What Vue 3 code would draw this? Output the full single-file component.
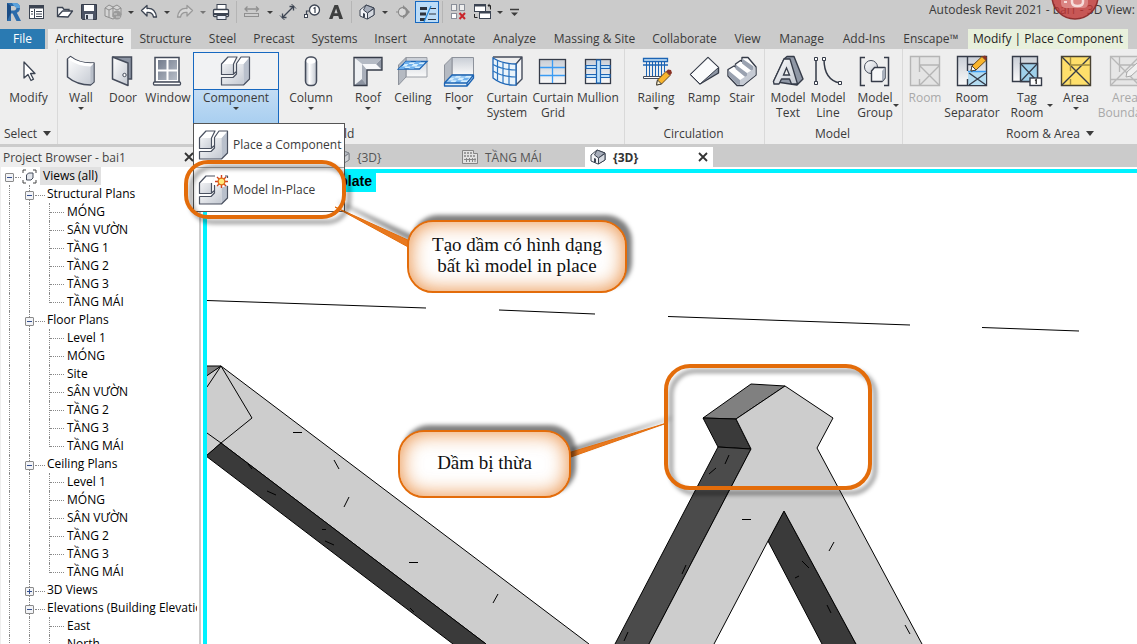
<script setup>
const icons = {
  revit: '<path d="M6 3h7.500q5.500 0 5.500 5 0 3.500-3.200 4.700L20 21h-4.500l-3.800-7.500H10V21H6z" fill="#2d6cab"/><path d="M6 3l4 3v7l-4 8z" fill="#1b4d86"/><path d="M10 6h3q2.200 0 2.200 2.200T13 10.500h-3z" fill="#cbcbcb"/><path d="M11 3h3q5 0 5 5l-4 0q0-2-2-2z" fill="#5ba2dc"/>',
  panel: '<rect x="4.500" y="5.500" width="14" height="13" fill="#fff" stroke="#3c4452"/><path d="M4 7h15" stroke="#3c4452" stroke-width="3"/><path d="M9.500 9v9M11 11.500h6M11 14h6M11 16.500h6M6 11.500h2M6 14h2" stroke="#3c4452"/>',
  open: '<path d="M4.500 16.500v-9h5l1.500 2h5v3" fill="#f4f5f7" stroke="#3c4452" stroke-width="1.300"/><path d="M4.500 16.500l5-5.500h10l-4.500 6z" fill="#fff" stroke="#3c4452" stroke-width="1.300" stroke-linejoin="round"/>',
  save: '<path d="M4.500 4.500h15v15h-14l-1-1z" fill="#4b5364" stroke="#343b49"/><rect x="7" y="5" width="10" height="6" fill="#fff"/><rect x="8" y="14" width="8" height="5.500" fill="#dfe3e9"/><rect x="9" y="15" width="2" height="4" fill="#343b49"/>',
  sync: '<path d="M4 8l4-3 4 2 4-2 4 3v7l-8 4-8-3z" fill="#d4d4d4" stroke="#8d8d8d"/><path d="M4 8l4 2 4-2 4 2 4-2M8 10v7M12 7v10" fill="none" stroke="#8d8d8d"/><circle cx="16" cy="15" r="4.500" fill="#9b9b9b"/><path d="M13 14h3M15 17h4" stroke="#d0d0d0"/>',
  undo: '<path d="M4.500 10.500L10 5.500V8.500q8-1 9.500 8.500h-3q-1-5-6.500-4.500v3.500z" fill="#fff" stroke="#3c4452" stroke-width="1.300" stroke-linejoin="round"/>',
  redo: '<path d="M19.500 10.500L14 5.500V8.500q-8-1-9.500 8.500h3q1-5 6.500-4.500v3.500z" fill="#d8d8d8" stroke="#999" stroke-width="1.300" stroke-linejoin="round"/>',
  print: '<rect x="8" y="4.500" width="9" height="6" fill="#fff" stroke="#3c4452"/><rect x="4.500" y="9.500" width="15" height="7" rx="1" fill="#fff" stroke="#3c4452" stroke-width="1.300"/><path d="M5 14h14" stroke="#3c4452" stroke-width="2"/><rect x="8" y="15.500" width="9" height="4" fill="#e9edf5" stroke="#3c4452"/>',
  measure: '<path d="M5 9h13M7.500 6.500L5 9l2.500 2.500M16 6.500L18.500 9 16 11.500" fill="none" stroke="#909090" stroke-width="1.300"/><rect x="4.500" y="13.500" width="14" height="3" fill="#ccc" stroke="#909090"/>',
  dim: '<path d="M6 18L18 6M6.500 13.500v4h4M13.500 6.500h4v4" fill="none" stroke="#3c4452" stroke-width="1.300"/><path d="M4 15.500l4.500 4.500M15.500 4l4.500 4.500" stroke="#3c4452"/>',
  tag: '<circle cx="14.500" cy="10" r="5" fill="#fff" stroke="#3c4452" stroke-width="1.300"/><path d="M13.500 8.500l1.500-1v5.500M9.500 11H6.500v4" fill="none" stroke="#3c4452" stroke-width="1.200"/><rect x="4.500" y="14.500" width="3" height="3" fill="#fff" stroke="#3c4452"/>',
  letter: '<path d="M5 19L10.500 5h3.500L19 19h-3.700l-1-3H9.500l-1 3zM10.400 13.300h3.200L12.100 8.500z" fill="#3f4040" fill-rule="evenodd"/>',
  house: '<path d="M5 10l6-5 8 3v7l-7 4-7-3z" fill="#f3f4f7" stroke="#3c4452" stroke-linejoin="round"/><path d="M11 5l8 3-6.500 5L8.500 10z" fill="#a7aebb" stroke="#3c4452" stroke-linejoin="round"/><path d="M12.500 13v6l6.500-4V8.500z" fill="#d5d9e0" stroke="#3c4452"/><path d="M8 13v4l2 .8v-4z" fill="#3c4452"/>',
  section: '<circle cx="12" cy="12" r="4.500" fill="#d9d9d9" stroke="#8b8b8b" stroke-width="1.300"/><path d="M12 5l7 7-7 7z" fill="#8b8b8b"/><circle cx="11.500" cy="12" r="3.300" fill="#d9d9d9"/><path d="M5 12h3" stroke="#8b8b8b"/>',
  thin: '<path d="M4 6.500h7M4 12h6M4 17.500h5" stroke="#2e333d" stroke-width="3"/><path d="M14 6.500h6M13 12h7M12 17.500h8" stroke="#2e333d"/><path d="M15 4L8 20" stroke="#2386d8" stroke-width="1.200"/>',
  hide: '<rect x="5.500" y="4.500" width="5" height="6" fill="#eee" stroke="#8a8f99"/><rect x="13.500" y="4.500" width="5" height="6" fill="#eee" stroke="#8a8f99"/><rect x="5.500" y="13.500" width="5" height="5" fill="#fff" stroke="#8a8f99"/><path d="M13.500 13l5.500 6M19 13l-5.500 6" stroke="#c9252b" stroke-width="2"/>',
  switch: '<rect x="4.500" y="4.500" width="11" height="7" fill="#fff" stroke="#3c4452"/><path d="M4 5.500h12" stroke="#3c4452" stroke-width="2"/><rect x="9.500" y="11.500" width="11" height="7" fill="#fff" stroke="#3c4452"/><path d="M9 12.500h12" stroke="#3c4452" stroke-width="2"/><path d="M18 5.500h2.500v4M4.500 14v3.500h3" fill="none" stroke="#222"/><path d="M17.500 5.500l2-2v4z" fill="#222"/>',
  more: '<path d="M0 2.500h9" stroke="#3c3c3c" stroke-width="1.500"/><path d="M1 5.500h7L4.500 9z" fill="#3c3c3c"/>',

  modify: '<path d="M11 7v16l4-3.500 3 6 2.500-1.300-3-5.700h4.500z" fill="#fff" stroke="#3c4452" stroke-width="1.300" stroke-linejoin="round"/>',
  wall: '<path d="M2.500 4l3-2.500Q15 9 29 8v19l-3.500 3Q12 30 2.500 22z" fill="url(#metal)" stroke="#454c5b" stroke-width="1.500" stroke-linejoin="round"/><path d="M3 4Q13 11.500 25.500 11.500L29 8Q15 9 5.500 2z" fill="#fff"/><path d="M25.500 12v17.500l3-2.500V9z" fill="#b9bfc9"/>',
  door: '<path d="M5.500 2h19v22h-4" fill="#8c94a3" stroke="#454c5b" stroke-width="1.500"/><path d="M5.500 2L21 8v22.500L5.500 24z" fill="url(#metal)" stroke="#454c5b" stroke-width="1.500" stroke-linejoin="round"/><circle cx="17.500" cy="20" r="1.700" fill="#fff" stroke="#454c5b"/>',
  window: '<rect x="3" y="2.500" width="24" height="25" fill="#fff" stroke="#454c5b" stroke-width="1.500"/><path d="M6 5h8.500v9.500H6zM16.500 5H25v9.500h-8.500zM6 16.500h8.500V25H6zM16.500 16.500H25V25h-8.500z" fill="url(#glass)"/><rect x="1.500" y="27" width="27" height="3" rx="1" fill="#fff" stroke="#454c5b" stroke-width="1.300"/>',
  component: '<path d="M1.500 22.500H13l3.500-3.500V8.500L21 2h8.500v22l-6 6h-22z" fill="#f2f4f7"/><path d="M1.500 22.500H13l4-3V9h6.500v21h-22z" fill="url(#metal)"/><path d="M23.500 9l6-7v22l-6 6z" fill="#b9c0cc"/><path d="M16.500 8.500L21 2h8.500l-6 7z" fill="#fff"/><path d="M1.500 9L8 2h8.500L13.500 9v10.500h-12z" fill="url(#metal)"/><path d="M1.500 9L8 2h8.500L13.500 9z" fill="#fff"/><path d="M13.500 19.500V9L17 2H8L1.500 9v10.500H13l3.500-3M1.500 22.500H13l3.500-3.500V8.500L21 2h8.500v22l-6 6h-22z" fill="none" stroke="#4a5160" stroke-width="1.200" stroke-linejoin="round"/>',
  inplace: '<path d="M1.500 22.500H13l4-3V12h6.500v18h-22z" fill="url(#metal)"/><path d="M23.500 14l6-3v13l-6 6z" fill="#b9c0cc"/><path d="M1.500 9L8 2h9l-3.500 7v10.500h-12z" fill="url(#metal)"/><path d="M1.500 9L8 2h9l-3.500 7z" fill="#fff"/><path d="M13.500 19.500V9M17 2H8L1.500 9v10.500H13l3.500-3M1.500 22.500H13l3.500-3.500V11M29.500 12v12l-6 6h-22v-7.500M27 2h2.500v2" fill="none" stroke="#4a5160" stroke-width="1.200" stroke-linejoin="round"/><path d="M23.500 1v13M17 7.500h13M19 3l9 9M28 3l-9 9" stroke="#d2401e" stroke-width="1.400"/><circle cx="23.500" cy="7.500" r="3.300" fill="#ffe97a" stroke="#e1701a" stroke-width="1.300"/>',
  column: '<rect x="10.500" y="2" width="11" height="28.500" rx="4.500" fill="url(#tube)" stroke="#454c5b" stroke-width="1.500"/><ellipse cx="16" cy="6" rx="4.500" ry="2.800" fill="#fff"/>',
  roof: '<path d="M2 2.500h28V15H15v15.500H2z" fill="#dfe2e7"/><path d="M2 2.500h28L24 9H10z" fill="#b4bac4"/><path d="M24 9l6-6v12H15l-5-6z" fill="#f7f8fa"/><path d="M2 2.500L10 9v15l-8 6.500z" fill="#eef0f3"/><path d="M10 9l5 6v15.500L10 24z" fill="#a9afba"/><path d="M2 30.500L10 24l5 6.500z" fill="#8d94a1"/><path d="M24 9l6-6v12z" fill="#8f96a3"/><path d="M2 2.500h28V15H15v15.500H2z" fill="none" stroke="#353b48" stroke-width="1.300"/>',
  ceiling: '<path d="M9 2.500h21V22H9z" fill="url(#soft)" stroke="#9b9fa6"/><path d="M1.500 10L9 2.500V22l-7.500 8z" fill="#b5bac2" stroke="#8d929b"/><path d="M1.500 14L9 6.500h21L22.500 14z" fill="#d6efff" stroke="#1c64b4" stroke-width="1.300"/><path d="M9 6.500h5L11.500 9h-5zM19 6.500h5L21.500 9h-5zM11.500 9h5L14 11.500H9zM21.500 9h5L24 11.500h-5zM4 11.500h5L6.500 14h-5zM14 11.500h5L16.500 14h-5z" fill="#6fb1ee"/>',
  floor: '<path d="M9 2.500h21.500V20H9z" fill="url(#soft)" stroke="#8d929b"/><path d="M1.500 10L9 2.500V20l-7.500 8z" fill="#b5bac2" stroke="#8d929b"/><path d="M1.500 28L9 20h21.500L24 28z" fill="#d6efff"/><path d="M9 20h5l-2.500 2.700h-5zM19 20h5l-2.500 2.700h-5zM11.500 22.700h5L14 25.300H9zM21.500 22.700h5L24 25.300h-5zM4 25.300h5L6.500 28h-5zM14 25.300h5L16.500 28h-5z" fill="#6fb1ee"/><path d="M1.500 28v3H24l6.500-8v-3L24 28zM24 28v3M1.500 28L9 20h21.500" fill="#cfe8fb" fill-opacity=".4" stroke="#1c64b4" stroke-width="1.300" stroke-linejoin="round"/>',
  csystem: '<path d="M2 2h29l-6 7v21l6-6V2" fill="#f4f5f7" stroke="#454c5b" stroke-width="1.400" stroke-linejoin="round"/><path d="M2 3Q12 9 25 9v21Q12 31 2 23z" fill="#eaf4fb" stroke="#1c64b4" stroke-width="1.300"/><path d="M2 9.500Q12 15 25 15M2 16Q12 22 25 22M6.500 5.500v20M12 7.500v21M18 8.500v21" fill="none" stroke="#2a74c0" stroke-width="1.200"/>',
  cgrid: '<rect x="2.500" y="4.500" width="26" height="24" fill="url(#soft)" stroke="#353b48" stroke-width="1.300"/><path d="M15.500 5v23M3 12.500h25M3 20.500h25" stroke="#3a9bf3" stroke-width="1.300"/>',
  mullion: '<rect x="3.500" y="4.500" width="25" height="24" fill="url(#soft)" stroke="#353b48" stroke-width="1.300"/><path d="M4 10.500h24v3H4zM4 19.500h24v3H4z" fill="#bfe2fb" stroke="#1c64b4" stroke-width="1.200"/><rect x="14.500" y="5" width="4" height="23" fill="#bfe2fb" stroke="#1c64b4" stroke-width="1.200"/>',
  railing: '<path d="M3.500 3.500h24v3h-24zM3 10h25" fill="#cfe9fb" stroke="#1c64b4" stroke-width="1.300"/><path d="M6.500 7v14M9.500 7v14M12.500 7v14M15.500 7v14M18.500 7v14M21.500 7v14M24.500 7v10" stroke="#1c64b4"/><path d="M3.500 21.500h20v2h-20z" fill="#fff" stroke="#454c5b"/><path d="M16.500 30l1-5L26 16.500l4 4-8.500 8.500z" fill="#f9b52d" stroke="#684717"/><path d="M26 16.500l2-2 3 .5 1 3-2 2.500z" fill="#8a3325"/><path d="M16.500 30l1-5 4 4z" fill="#fff2cc" stroke="#444"/>',
  ramp: '<path d="M2.500 19.500L20 2.500l10.500 10v5.500L12 29z" fill="#8f97a5" stroke="#353b48" stroke-width="1.400" stroke-linejoin="round"/><path d="M2.500 19.500L20 2.500l10.500 10L12 29z" fill="#fafbfc" stroke="#353b48" stroke-linejoin="round"/>',
  stair: '<path d="M2 14.500l6-3.500 1.500 1V9l5-3.500 1.500 1V2.500h6L30 12v8L17 30.500H11L2 21z" fill="#fff" stroke="#353b48" stroke-width="1.400" stroke-linejoin="round"/><path d="M2.500 15.500L14 25v5l-3-.5-8.500-9zM9.500 9.500L21 18v5.500L9.500 14zM16 3.500L27 11v6L16 8.500z" fill="#9aa2b0"/><path d="M14 25l7-4.500V18l6-3.500V11l2.500 1.500V20L17 30h-3z" fill="#c6cbd4"/>',
  mtext: '<path d="M1.500 26.500L12 4l3-2.500h7L31 24l-6 6z" fill="#8f97a5" stroke="#353b48" stroke-width="1.400" stroke-linejoin="round"/><path d="M1.500 26.500L12 4h6l7.500 25h-6l-2-5h-8l-2.500 5H2z" fill="url(#metal)" stroke="#353b48" stroke-width="1.300" stroke-linejoin="round"/><path d="M11.500 20l3-7 3 7z" fill="#eee" stroke="#353b48" stroke-width="1.300"/>',
  mline: '<path d="M4 4v24M12 4Q12 25 28 28" fill="none" stroke="#353b48" stroke-width="1.500"/><path d="M2.500 2.500h3v3h-3zM2.500 26.500h3v3h-3zM10.500 2.500h3v3h-3zM26.500 26.500h3v3h-3z" fill="#fff" stroke="#353b48"/>',
  mgroup: '<path d="M6 2.500H1.500v28H6M25 2.500h4.500v28H25" fill="none" stroke="#353b48" stroke-width="1.500"/><circle cx="12" cy="12" r="6.500" fill="url(#metal)" stroke="#454c5b"/><path d="M12.500 16l3-3.500H26V23l-3 3.500H12.500z" fill="#f6f7f9" stroke="#353b48" stroke-width="1.400" stroke-linejoin="round"/><path d="M23 16l3-3.500V23l-3 3.500z" fill="#a9b0bc"/>',
  room: '<g fill="none" stroke="#b5b5b5" stroke-width="1.400"><path d="M1.500 1.500h29v29h-29z" fill="#e4e4e4"/><path d="M10.500 2v15M10.500 24v6M11 10h19M11 11l19 19M30 11L11 30"/></g>',
  separator: '<g stroke="#353b48" stroke-width="1.400"><path d="M1.500 1.500h29v29h-29z" fill="url(#soft)"/><path d="M12 17h18v13H12z" fill="#b4dcf1" stroke="none"/><path d="M11.500 2v14M11.500 24v6M12 9.500h6M13 30l17-12M13 18l17 12" fill="none"/></g><path d="M12 16.500h18" stroke="#3a9bf3" stroke-width="1.500"/><path d="M15 16l1-5L26 1.500l4 4L20 15z" fill="#f9b52d" stroke="#684717"/><path d="M26 1.500l4 4 1-3-2-2z" fill="#8a3325"/><path d="M15 16l1-5 4 4z" fill="#fff" stroke="#444"/>',
  tagroom: '<g stroke="#353b48" stroke-width="1.400"><path d="M1.500 1.500h25v25h-25z" fill="url(#soft)"/><path d="M9.500 8.500h17v18h-17z" fill="#9fd0ea"/><path d="M9.500 2v7M10 9l16 17M26 9L10 26" fill="none" stroke-width="1.200"/></g><rect x="19" y="23" width="11.500" height="7.500" fill="#fff" stroke="#353b48" stroke-width="1.400"/><path d="M24 25.500l1.200-.8V29" fill="none" stroke="#222" stroke-width="1.300"/>',
  area: '<g stroke="#4a4433" stroke-width="1.400" fill="none"><path d="M1.500 1.500h29v29h-29z" fill="#fedf6b"/><path d="M2 2l28 28M30 2L2 30" stroke="#353b48"/><path d="M10.500 2v14M10.500 24v6M11 10h19" stroke="#a08c3e"/></g>',
  boundary: '<g stroke="#b8b8b8" stroke-width="1.300" fill="none"><path d="M1.500 1.500h29v29h-29z" fill="#e6e6e6"/><path d="M2 2l28 28M30 2L2 30M10.500 2v15M11 10h19M2 24.500h28"/></g><path d="M17 22l1-5 10-9 4 4-10 9z" fill="#f0f0f0" stroke="#aaa"/>',
  plan: '<path d="M.5 1.500h11v3h4v10h-15z" fill="#e2e2e2" stroke="#858585"/><path d="M2 4h8M2 7h12" stroke="#858585" stroke-width="1.500" stroke-dasharray="2 1"/><path d="M4.500 9v4M7.500 9v4M10.500 9v4M13 9v4M2 10.500h12" stroke="#858585"/>',
  close: '<path d="M1 1l8 8M9 1L1 9" stroke="#333" stroke-width="1.800"/>',
  views: '<path d="M4 1H1v3M11 1h3v3M4 14H1v-3M11 14h3v-3" fill="none" stroke="#454545"/><path d="M4.500 6l2-2H11v5l-2 2H4.500z" fill="#e3e6ec" stroke="#454c5b"/>',
}

const quick = [
  ['revit', 'Revit'], ['panel', 'Home'], ['gap'], ['open', 'Open'], ['save', 'Save'], ['sync', 'Synchronize'], ['caret', 'Synchronize options'],
  ['undo', 'Undo'], ['caret', 'Undo history'], ['redo', 'Redo'], ['caret', 'Redo history', true], ['print', 'Print'], ['sep'],
  ['measure', 'Measure'], ['caret', 'Measure options'], ['dim', 'Aligned dimension'], ['tag', 'Tag by category'], ['letter', 'Text'], ['sep'],
  ['house', 'Default 3D view'], ['caret', '3D view options'], ['section', 'Section'], ['thin', 'Thin lines'], ['sep'],
  ['hide', 'Close inactive views'], ['switch', 'Switch windows'], ['caret', 'Window list'], ['more', 'Customize'],
]

const tabs = ['Architecture', 'Structure', 'Steel', 'Precast', 'Systems', 'Insert', 'Annotate', 'Analyze', 'Massing & Site', 'Collaborate', 'View', 'Manage', 'Add-Ins', 'Enscape™', 'Modify | Place Component']

const t = (icon, a, b = '', caret = '') => ({ icon, lines: b ? [a, b] : [a], caret })
const groups = [
  { name: 'Select', key: 'select', arrow: true, tools: [t('modify', 'Modify')] },
  { name: 'Build', key: 'build', tools: [
    t('wall', 'Wall', '', 'below'), t('door', 'Door'), t('window', 'Window'), t('component', 'Component', '', 'below'),
    t('column', 'Column', '', 'below'), t('roof', 'Roof', '', 'below'), t('ceiling', 'Ceiling'), t('floor', 'Floor', '', 'below'),
    t('csystem', 'Curtain', 'System'), t('cgrid', 'Curtain', 'Grid'), t('mullion', 'Mullion')] },
  { name: 'Circulation', key: 'circulation', tools: [t('railing', 'Railing', '', 'below'), t('ramp', 'Ramp'), t('stair', 'Stair')] },
  { name: 'Model', key: 'model', tools: [t('mtext', 'Model', 'Text'), t('mline', 'Model', 'Line'), t('mgroup', 'Model', 'Group', 'side')] },
  { name: 'Room & Area', key: 'room', arrow: true, tools: [
    t('room', 'Room'), t('separator', 'Room', 'Separator'), t('tagroom', 'Tag', 'Room', 'side'), t('area', 'Area', '', 'below'), t('boundary', 'Area', 'Boundary')] },
]

const branch = (label, children, open = true) => ({ label, children, open })
const sections = [
  branch('Structural Plans', ['MÓNG', 'SÂN VƯỜN', 'TẦNG 1', 'TẦNG 2', 'TẦNG 3', 'TẦNG MÁI']),
  branch('Floor Plans', ['Level 1', 'MÓNG', 'Site', 'SÂN VƯỜN', 'TẦNG 2', 'TẦNG 3', 'TẦNG MÁI']),
  branch('Ceiling Plans', ['Level 1', 'MÓNG', 'SÂN VƯỜN', 'TẦNG 2', 'TẦNG 3', 'TẦNG MÁI']),
  branch('3D Views', [], false),
  branch('Elevations (Building Elevation)', ['East', 'North']),
]
</script>

<template>
  <div class="app">
    <svg class="defs" width="0" height="0" aria-hidden="true">
      <defs>
        <linearGradient id="metal" x1="0" y1="0" x2="1" y2="1"><stop offset="0" stop-color="#fff" /><stop offset="1" stop-color="#c3c8d1" /></linearGradient>
        <linearGradient id="glass" x1="0" y1="0" x2="1" y2="1"><stop offset="0" stop-color="#737c8d" /><stop offset="1" stop-color="#b8bec8" /></linearGradient>
        <linearGradient id="soft" x1="0" y1="0" x2="0" y2="1"><stop offset="0" stop-color="#c9ced6" /><stop offset="1" stop-color="#fafafa" /></linearGradient>
        <linearGradient id="tube"><stop offset="0" stop-color="#aeb4bf" /><stop offset=".35" stop-color="#fff" /><stop offset="1" stop-color="#c0c5ce" /></linearGradient>
      </defs>
    </svg>

    <header class="titlebar">
      <div class="quick">
        <template v-for="(q, i) in quick" :key="i">
          <span v-if="q[0] === 'gap'" class="gap"></span>
          <span v-else-if="q[0] === 'sep'" class="sep"></span>
          <button v-else-if="q[0] === 'caret'" class="qcaret" :aria-label="q[1]"><span class="caret" :class="{ dim: q[2] }"></span></button>
          <button v-else-if="q[0] === 'more'" class="qcaret more" :aria-label="q[1]"><svg width="9" height="10" v-html="icons.more" /></button>
          <button v-else class="qbtn" :class="{ on: q[0] === 'thin' }" :aria-label="q[1]"><svg width="24" height="24" viewBox="0 0 24 24" v-html="icons[q[0]]" /></button>
        </template>
      </div>
      <span class="title">Autodesk Revit 2021 - bai1 - 3D View: {3D}</span>
      <svg class="recorder" width="48" height="21" viewBox="0 0 48 21" aria-hidden="true">
        <circle cx="24" cy="-4" r="23" fill="#c53634" fill-opacity=".78" stroke="#8f2f2f" stroke-width="1.500" />
        <path d="M10 0v3q0 5 5 5h17q5 0 5-5V0z" fill="#db8583" />
        <path d="M21 0v2q0 4 5.500 4T32 2V0" fill="none" stroke="#f6dcda" stroke-width="2.500" />
        <path d="M13 2h3" stroke="#f6dcda" stroke-width="2" />
      </svg>
    </header>

    <nav class="tabs">
      <button class="file">File</button>
      <span></span>
      <template v-for="(tab, i) in tabs" :key="tab">
        <span v-if="i === 14"></span>
        <button :class="{ active: i === 0, context: i === 14 }">{{ tab }}</button>
      </template>
    </nav>

    <section class="ribbon">
      <div v-for="g in groups" :key="g.key" class="group" :class="g.key">
        <div class="tools">
          <div v-for="tool in g.tools" :key="tool.icon" class="cell">
            <button class="tool" :class="{ chosen: tool.icon === 'component', off: tool.icon === 'room' || tool.icon === 'boundary' }">
              <span class="pic"><svg width="32" height="32" viewBox="0 0 32 32" v-html="icons[tool.icon]" /></span>
              <span class="words">
                <span v-for="l in tool.lines" :key="l">{{ l }}</span>
                <span v-if="tool.caret" class="caret" :class="tool.caret"></span>
              </span>
            </button>
            <div v-if="tool.icon === 'component'" class="menu">
              <button><svg width="32" height="32" viewBox="0 0 32 32" v-html="icons.component" />Place a Component</button>
              <button><svg width="32" height="32" viewBox="0 0 32 32" v-html="icons.inplace" />Model In-Place</button>
            </div>
          </div>
        </div>
        <div class="gname">{{ g.name }}<span v-if="g.arrow" class="caret big"></span></div>
      </div>
    </section>

    <main class="work">
      <aside class="browser">
        <div class="bhead">
          <span>Project Browser - bai1</span>
          <button aria-label="Close"><svg width="10" height="10" v-html="icons.close" /></button>
        </div>
        <div class="tree">
          <div class="row">
            <span class="col"><button class="box" aria-label="Collapse"></button></span>
            <svg class="vicon" width="15" height="15" v-html="icons.views" />
            <span class="root">Views (all)</span>
          </div>
          <template v-for="s in sections" :key="s.label">
            <div class="row">
              <span class="col line"></span>
              <span class="col line"><button class="box" :class="{ plus: !s.open }" :aria-label="s.open ? 'Collapse' : 'Expand'"></button></span>
              <span class="name">{{ s.label }}</span>
            </div>
            <div v-for="(c, i) in s.children" :key="c" class="row">
              <span class="col line"></span>
              <span class="col line"></span>
              <span class="col line elbow" :class="{ last: i === s.children.length - 1 && c !== 'North' }"></span>
              <span class="name">{{ c }}</span>
            </div>
          </template>
        </div>
      </aside>

      <section class="view">
        <div class="vtabs">
          <button class="vtab"><svg width="16" height="16" viewBox="4 4 16 16" class="faded" v-html="icons.house" />{3D}</button>
          <button class="vtab"><svg width="16" height="16" v-html="icons.plan" />TẦNG MÁI</button>
          <button class="vtab current"><svg width="16" height="16" viewBox="4 4 16 16" v-html="icons.house" /><b>{3D}</b><svg class="x" width="10" height="10" v-html="icons.close" /></button>
        </div>
        <div class="canvas">
          <span class="template">plate</span>
          <svg class="drawing" viewBox="207 173 930 471" preserveAspectRatio="xMinYMin slice">
            <g stroke="#000" stroke-width="1" stroke-linejoin="round">
              <path d="M207 300.500L426 308M499 310L595 314M668 316.500L910 325M982 327.500L1079 331" fill="none" />
              <path d="M205 376L221 366L589 644L600 660H500L486 644L221 443L205 457z" fill="#cdcdcd" />
              <path d="M205 366H221L205 377z" fill="#808080" />
              <path d="M205 457L221 443L486 644L500 660H470L453 644L206 456z" fill="#3a3a3a" />
              <path d="M207 387L221 366L252 418L221 443M207 433L221 443" fill="none" />
              <path d="M293 432.500h9M334 460l5 9M349 497l-5 10M409 562.500h9M498 594l-5 9M267 491l9 4M322 529.500h4M325 541l9 4M248 464l4 5M410 608l4 4" fill="none" />
              <path d="M751 384L785 386L736 419L703 418z" fill="#808080" />
              <path d="M703 418L736 419L751 449L718 447z" fill="#3a3a3a" />
              <path d="M718 447L751 449L649 644L640 660H606L615 644z" fill="#4b4b4b" />
              <path d="M784 511L856 644L864 660H830L822 644L768 541z" fill="#3a3a3a" />
              <path d="M785 386L833 418L817 448L922 644L930 660H864L856 644L784 511L768 541L714 644L706 660H640L649 644L751 449L736 419z" fill="#cdcdcd" />
              <path d="M729 455l-4 9M716 468l-7 6M742 519.500h9M834 542l-5 9M802 561l7 7M795 578l4-2M827 605l4 8M905 625l5 9M686 565l-4 9M628 632l-4 9" fill="none" />
            </g>
          </svg>
        </div>
      </section>
    </main>

    <div class="notes">
      <svg class="marks" width="100%" height="100%" aria-hidden="true">
        <g class="pointers">
          <path d="M335 207L410 241V248z" />
          <path d="M568 453V458L667 423z" />
        </g>
        <g class="rings">
          <rect x="186" y="162" width="158" height="55" rx="22" />
          <rect x="666" y="366" width="204" height="122" rx="24" />
        </g>
      </svg>
      <p class="callout first">Tạo dầm có hình dạng<br />bất kì model in place</p>
      <p class="callout second">Dầm bị thừa</p>
    </div>
  </div>
</template>

<style>
html, body { margin: 0; height: 100%; overflow: hidden; }
</style>

<style scoped>
.app { position: relative; display: flex; flex-direction: column; height: 100vh; overflow: hidden; background: #cbcbcb; color: #3a3a3a; font: 12px/15px "Open Sans", "Noto Sans", sans-serif; }
.app * { box-sizing: border-box; }
button { margin: 0; padding: 0; border: 0; background: none; color: inherit; font: inherit; white-space: nowrap; }
svg { display: block; flex: none; }
.defs { position: absolute; }
.caret { display: block; width: 0; height: 0; border: 3px solid transparent; border-top-color: #3c3c3c; border-bottom: 0; }
.caret.dim { border-top-color: #777; }
.caret.big { border-width: 5px 4px 0; }

.titlebar { position: relative; display: flex; flex: none; height: 29px; overflow: hidden; }
.quick { display: flex; flex: none; width: 929px; padding-left: 1px; }
.qbtn { width: 24px; height: 24px; }
.qbtn.on { display: grid; place-items: center; height: 22px; margin-top: 1px; border: 1px solid #1668c0; background: #bcdcf7; overflow: hidden; }
.qcaret { display: grid; place-items: center; width: 12px; height: 24px; }
.more { margin-left: 2px; }
.gap { width: 4px; }
.sep { width: 1px; height: 22px; margin: 1px 3px; background: #b5b5b5; }
.title { padding-top: 2px; white-space: nowrap; }
.recorder { position: absolute; left: 1051px; top: 0; }

.tabs { display: grid; flex: none; height: 20px; grid-template-columns: 45px 3px 83px 69px 45px 58px 63px 49px 69px 61px 99px 81px 45px 63px 62px 72px 1px 160px; }
.tabs button { padding-bottom: 2px; text-align: center; }
.tabs .file { background: #2a7ab2; color: #fff; }
.tabs .active { background: #eee; color: #111; }
.tabs .context { background: #e8f0dc; color: #222; }

.ribbon { display: flex; flex: none; height: 95px; background: #eee; }
.group { display: flex; flex: none; flex-direction: column; border-right: 1px solid #d9d9d9; }
.tools { display: grid; height: 77px; padding-top: 3px; }
.select .tools { grid-template-columns: 57px; }
.build .tools { grid-template-columns: 44px 40px 50px 86px 64px 50px 40px 52px 44px 48px 42px; padding-left: 1px; padding-right: 5px; }
.circulation .tools { grid-template-columns: 48px 48px 28px; padding-left: 7px; padding-right: 8px; }
.model .tools { grid-template-columns: 38px 42px 52px; padding-left: 4px; padding-right: 1px; }
.room .tools { grid-template-columns: 40px 54px 56px 42px 56px; padding-left: 2px; padding-right: 46px; }
.cell { position: relative; height: 72px; }
.tool { display: flex; flex-direction: column; align-items: center; width: 100%; height: 72px; }
.pic { display: grid; place-items: center; height: 38px; }
.words { position: relative; display: flex; flex-direction: column; align-items: center; width: 100%; flex: 1; }
.below { margin-top: 2px; }
.side { position: absolute; right: 2px; top: 14px; }
.off { color: #a9a9a9; }
.chosen { border: 1px solid #1668c0; background: #f1f2f3; }
.chosen .pic { height: 36px; }
.chosen .words { border-top: 1px solid #1668c0; background: linear-gradient(#c3dcf4, #a9cff0); }
.gname { display: flex; align-items: center; justify-content: center; gap: 6px; height: 15px; padding-right: 2px; }

.menu { position: absolute; z-index: 3; left: 0; top: 71px; width: 152px; border: 1px solid #555; background: #fff; }
.menu button { display: flex; align-items: center; gap: 3px; width: 100%; height: 43px; padding-left: 4px; padding-bottom: 2px; }
.menu button + button { height: 44px; padding-bottom: 0; border-top: 1px solid #aaa; }

.work { display: flex; flex: 1; min-height: 0; margin-top: 3px; }
.browser { display: flex; flex: none; flex-direction: column; width: 199px; border-left: 1px solid #eee; background: #fff; overflow: hidden; }
.bhead { display: flex; flex: none; align-items: center; justify-content: space-between; height: 20px; padding: 0 5px 0 2px; background: #eee; color: #444; }
.tree { flex: 1; min-height: 0; margin-right: 2px; overflow: hidden; color: #000; }
.row { display: flex; align-items: center; height: 18px; white-space: nowrap; }
.col { position: relative; flex: none; width: 20px; height: 18px; }
.col.line::before { content: ""; position: absolute; left: 8px; top: 0; bottom: 0; border-left: 1px dotted #888; }
.col.last::before { bottom: 8px; }
.elbow::after { content: ""; position: absolute; left: 9px; top: 9px; width: 14px; border-top: 1px dotted #888; }
.box { position: absolute; left: 4px; top: 6px; width: 9px; height: 9px; border: 1px solid #8a8a8a; border-radius: 1px; background: #f2f3f6; }
.box::before, .plus::after { content: ""; position: absolute; left: 1px; top: 3px; width: 5px; height: 1px; background: #35508f; }
.plus::after { left: 3px; top: 1px; width: 1px; height: 5px; }
.col:has(.box)::after { content: ""; position: absolute; left: 14px; top: 10px; width: 10px; border-top: 1px dotted #888; }
.vicon { position: relative; margin-left: 1px; background: #fff; }
.root { margin-left: 3px; padding: 0 3px; height: 18px; line-height: 17px; background: #e1e1e1; }
.name { padding: 0 0 2px 6px; }

.view { display: flex; flex: 1; flex-direction: column; min-width: 0; }
.vtabs { display: flex; flex: none; height: 20px; padding-left: 130px; color: #555; }
.vtab { display: flex; flex: none; align-items: center; gap: 7px; width: 128px; padding: 0 5px; }
.vtab.current { background: #fff; color: #333; }
.faded { opacity: .5; }
.vtab .x { margin-left: auto; }
.canvas { position: relative; flex: 1; min-height: 0; margin-left: 2px; border: solid #fff; border-width: 2px 0 0 2px; background: #fff; overflow: hidden; }
.template { position: absolute; z-index: 1; left: 0; top: 0; width: 173px; height: 23px; padding: 4px 4px 0 0; text-align: right; background: #00f2ff; color: #000; font: bold 14px/17px "Liberation Sans", Arial, sans-serif; }
.drawing { position: relative; width: 100%; height: 100%; border: solid #00f2ff; border-width: 4px 0 0 4px; }

.notes { position: absolute; z-index: 5; inset: 0; pointer-events: none; }
.rings { fill: none; stroke: #e36c0a; stroke-width: 4; filter: drop-shadow(5px 5px 2px rgba(0, 0, 0, .4)); }
.pointers { fill: #e8791f; stroke: #e36c0a; stroke-width: 1; filter: drop-shadow(4px -5px 2px rgba(0, 0, 0, .45)); }
.callout { position: absolute; display: grid; place-content: center; margin: 0; padding-bottom: 3px; border: 2px solid #e36c0a; border-radius: 26px; background: #fff; box-shadow: inset 0 0 20px 1px rgba(227, 108, 10, .75), 5px -5px 4px rgba(0, 0, 0, .5); color: #111; font: 19px/21px "Liberation Serif", "Times New Roman", serif; text-align: center; white-space: nowrap; }
.first { left: 407px; top: 220px; width: 220px; height: 73px; }
.second { left: 398px; top: 430px; width: 173px; height: 68px; }
</style>
